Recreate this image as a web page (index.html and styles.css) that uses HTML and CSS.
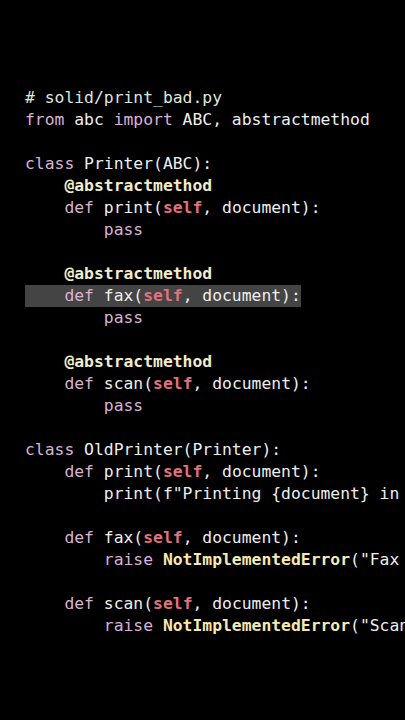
FILE: index.html
```html
<!DOCTYPE html>
<html>
<head>
<meta charset="utf-8">
<link rel="stylesheet" href="styles.css">
</head>
<body>
<div class="code">
<div class="ln"><span class="cm"># solid/print_bad.py</span></div>
<div class="ln"><span class="kw">from</span> abc <span class="kw">import</span> ABC, abstractmethod</div>
<div class="ln"> </div>
<div class="ln"><span class="kw">class</span> Printer(ABC):</div>
<div class="ln">    <span class="dec">@abstractmethod</span></div>
<div class="ln">    <span class="kw">def</span> print(<span class="sf">self</span>, document):</div>
<div class="ln">        <span class="kw">pass</span></div>
<div class="ln"> </div>
<div class="ln">    <span class="dec">@abstractmethod</span></div>
<div class="ln hl">    <span class="kw">def</span> fax(<span class="sf">self</span>, document):</div>
<div class="ln">        <span class="kw">pass</span></div>
<div class="ln"> </div>
<div class="ln">    <span class="dec">@abstractmethod</span></div>
<div class="ln">    <span class="kw">def</span> scan(<span class="sf">self</span>, document):</div>
<div class="ln">        <span class="kw">pass</span></div>
<div class="ln"> </div>
<div class="ln"><span class="kw">class</span> OldPrinter(Printer):</div>
<div class="ln">    <span class="kw">def</span> print(<span class="sf">self</span>, document):</div>
<div class="ln">        print(f"Printing {document} in</div>
<div class="ln"> </div>
<div class="ln">    <span class="kw">def</span> fax(<span class="sf">self</span>, document):</div>
<div class="ln">        <span class="kw">raise</span> <span class="err">NotImplementedError</span>("Fax</div>
<div class="ln"> </div>
<div class="ln">    <span class="kw">def</span> scan(<span class="sf">self</span>, document):</div>
<div class="ln">        <span class="kw">raise</span> <span class="err">NotImplementedError</span>("Scan</div>
</div>
</body>
</html>
```
FILE: styles.css
```css
html, body {
  margin: 0;
  padding: 0;
  background: #000;
  width: 405px;
  height: 720px;
  overflow: hidden;
}
.code {
  padding: 87px 0 0 25px;
  font-family: "DejaVu Sans Mono", "Liberation Mono", monospace;
  font-size: 16.37px;
  line-height: 22px;
  color: #eeeeee;
}
.ln {
  height: 22px;
  white-space: pre;
}
.hl {
  width: fit-content;
  background: #444444;
}
.cm { color: #dfe6dc; }
.kw { color: #d9b3d6; }
.sf { color: #e0727f; font-weight: bold; }
.dec { color: #f1ecc9; font-weight: bold; }
.err { color: #f6eab0; font-weight: bold; }
```
